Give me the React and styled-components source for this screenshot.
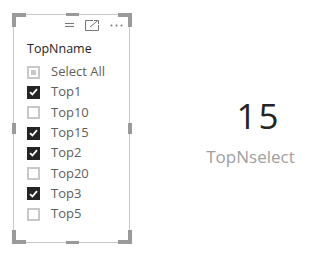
import React from "react";
import styled, { createGlobalStyle } from "styled-components";

const GlobalStyle = createGlobalStyle`
  html, body {
    margin: 0;
    padding: 0;
    background: #fff;
  }
  body {
    font-family: "Open Sans", "Noto Sans", sans-serif;
  }
`;

const Page = styled.div`
  display: flex;
  width: 315px;
  height: 259px;
  box-sizing: border-box;
  padding: 14px 0 0 13px;
`;

const Frame = styled.div`
  position: relative;
  width: 117px;
  height: 229px;
  box-sizing: border-box;
  border: 1px solid #c8c8c8;
  padding: 4px 0 0 13px;
  display: flex;
  flex-direction: column;
`;

const Corner = styled.div`
  position: absolute;
  width: 10px;
  height: 10px;
  border-color: #9a9a9a;
  border-style: solid;
  border-width: 0;
  ${p => p.top && "top: -2px; border-top-width: 4px;"};
  ${p => p.bottom && "bottom: -2px; border-bottom-width: 4px;"};
  ${p => p.left && "left: -2px; border-left-width: 4px;"};
  ${p => p.right && "right: -3px; border-right-width: 4px;"};
`;

const HandleH = styled.div`
  position: absolute;
  left: 52px;
  width: 13px;
  height: 3px;
  background: #9a9a9a;
  ${p => (p.bottom ? "bottom: -2px;" : "top: -2px;")};
`;

const HandleV = styled.div`
  position: absolute;
  top: 108px;
  width: 4px;
  height: 11px;
  background: #9a9a9a;
  ${p => (p.right ? "right: -3px;" : "left: -2px;")};
`;

const Toolbar = styled.div`
  display: flex;
  justify-content: flex-end;
  align-items: center;
  gap: 11px;
  height: 12px;
  padding-right: 6px;
`;

const Title = styled.div`
  margin-top: 10px;
  font-size: 12.5px;
  line-height: 16px;
  color: #252423;
`;

const List = styled.div`
  display: flex;
  flex-direction: column;
  margin-top: 4px;
`;

const Row = styled.div`
  display: flex;
  align-items: center;
  gap: 11px;
  height: 20.3px;
  font-size: 13px;
  color: #605e5c;
`;

const Box = styled.div`
  width: 13px;
  height: 13px;
  box-sizing: border-box;
  flex-shrink: 0;
  display: flex;
  align-items: center;
  justify-content: center;
  margin-top: 2px;
  background: ${p => (p.checked ? "#252423" : "#fff")};
  border: 2px solid ${p => (p.checked ? "#252423" : "#c8c8c8")};
`;

const Partial = styled.div`
  width: 5px;
  height: 5px;
  background: #c8c8c8;
`;

const Card = styled.div`
  flex: 1;
  display: flex;
  flex-direction: column;
  align-items: center;
  padding-top: 80px;
  padding-left: 56px;
`;

const Value = styled.div`
  font-size: 35px;
  line-height: 44px;
  letter-spacing: 2px;
  padding-left: 16px;
  color: #252423;
`;

const Label = styled.div`
  margin-top: 8px;
  font-size: 17px;
  line-height: 22px;
  color: #a0a0a0;
`;

const items = [
  { name: "Top1", checked: true },
  { name: "Top10", checked: false },
  { name: "Top15", checked: true },
  { name: "Top2", checked: true },
  { name: "Top20", checked: false },
  { name: "Top3", checked: true },
  { name: "Top5", checked: false }
];

const Check = () => (
  <svg width="9" height="8" viewBox="0 0 9 8">
    <path d="M1 4.2 L3.4 6.5 L8 1.2" fill="none" stroke="#fff" strokeWidth="1.8" />
  </svg>
);

const MenuIcon = () => (
  <svg width="9" height="6" viewBox="0 0 9 6">
    <path d="M0 1.5 H9 M0 4.5 H9" stroke="#777" strokeWidth="1" />
  </svg>
);

const FocusIcon = () => (
  <svg width="14" height="11" viewBox="0 0 14 11">
    <path d="M8 0.5 H0.5 V10.5 H13.5 V5" fill="none" stroke="#777" strokeWidth="1" />
    <path d="M5 7 L12.5 0.8 M9 0.5 H13.5 V4" fill="none" stroke="#777" strokeWidth="1" />
  </svg>
);

const MoreIcon = () => (
  <svg width="13" height="3" viewBox="0 0 13 3">
    <circle cx="1.5" cy="1.5" r="1" fill="#777" />
    <circle cx="6.5" cy="1.5" r="1" fill="#777" />
    <circle cx="11.5" cy="1.5" r="1" fill="#777" />
  </svg>
);

export default function App() {
  return (
    <>
      <GlobalStyle />
      <Page>
        <Frame>
          <Corner top left />
          <Corner top right />
          <Corner bottom left />
          <Corner bottom right />
          <HandleH />
          <HandleH bottom />
          <HandleV />
          <HandleV right />
          <Toolbar>
            <MenuIcon />
            <FocusIcon />
            <MoreIcon />
          </Toolbar>
          <Title>TopNname</Title>
          <List>
            <Row>
              <Box>
                <Partial />
              </Box>
              Select All
            </Row>
            {items.map(item => (
              <Row key={item.name}>
                <Box checked={item.checked}>{item.checked && <Check />}</Box>
                {item.name}
              </Row>
            ))}
          </List>
        </Frame>
        <Card>
          <Value>15</Value>
          <Label>TopNselect</Label>
        </Card>
      </Page>
    </>
  );
}
